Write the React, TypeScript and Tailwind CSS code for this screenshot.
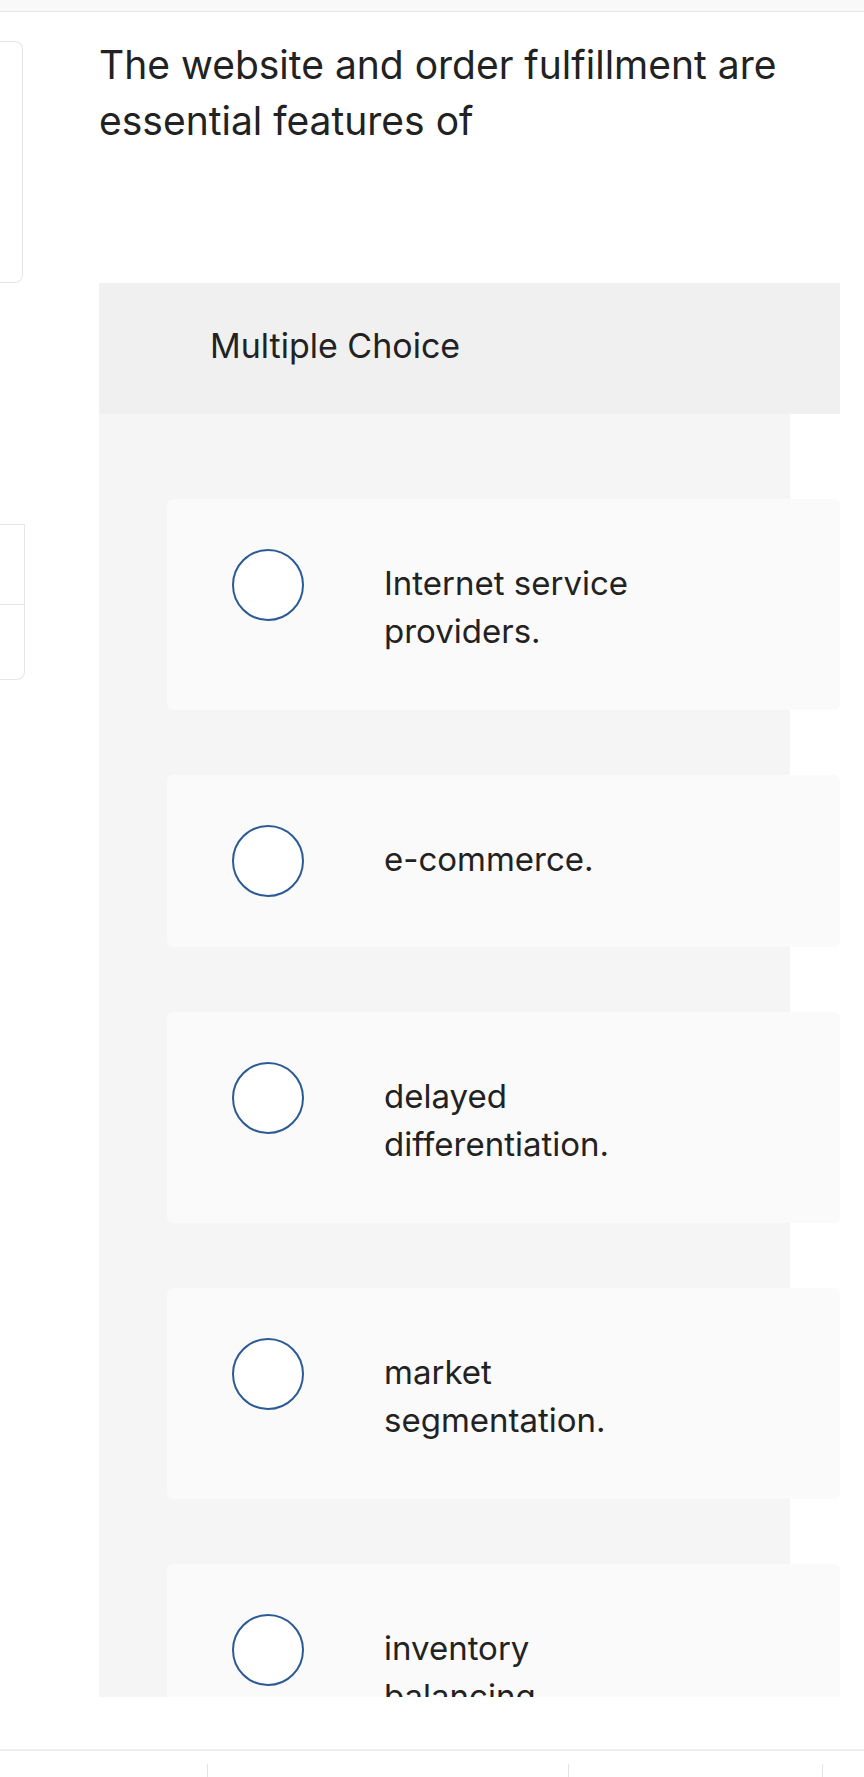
import React from "react";

const options = [
  "Internet service providers.",
  "e-commerce.",
  "delayed differentiation.",
  "market segmentation.",
  "inventory balancing.",
];

const App: React.FC = () => {
  return (
    <div className="w-[864px] h-[1777px] bg-white overflow-hidden flex flex-col font-['Inter',sans-serif] [font-variant-ligatures:none] text-[#222222]">
      {/* top strip */}
      <div className="h-[12px] shrink-0 bg-[#f9f9f9] border-b border-[#e8e8e8]" />

      <div className="flex h-[1737px] shrink-0">
        {/* left side panels */}
        <div className="w-[99px] shrink-0 flex flex-col">
          <div className="mt-[29px] w-[23px] h-[242px] bg-white border border-l-0 border-[#e6e6e6] rounded-r-lg" />
          <div className="mt-[241px] w-[25px] h-[156px] bg-white border border-l-0 border-[#e6e6e6] rounded-br-lg flex flex-col">
            <div className="h-[80px] border-b border-[#e6e6e6]" />
          </div>
        </div>

        {/* question */}
        <div className="w-[741px] shrink-0 flex flex-col">
          <div className="h-[271px] shrink-0 pt-[25px]">
            <p className="text-[39px] leading-[56px] text-[#222222]">
              The website and order fulfillment are essential features of
            </p>
          </div>

          <div className="h-[1414px] shrink-0 overflow-hidden">
            <div className="h-[131px] bg-[#f0f0f0] pl-[111px] pt-[45px]">
              <h2 className="text-[34px] leading-[36px] text-[#222222]">Multiple Choice</h2>
            </div>

            <div className="w-[691px] min-h-full bg-[#f5f5f5] pt-[85px] flex flex-col gap-[65px]">
              {options.map((opt) => (
                <div
                  key={opt}
                  className="w-[673px] ml-[68px] shrink-0 bg-[#fafafa] rounded-md flex items-start pl-[65px] py-[50px]"
                >
                  <div className="w-[72px] h-[72px] shrink-0 rounded-full border-2 border-[#2c5a94] bg-white" />
                  <span className="ml-[80px] mt-[10px] mb-[5px] w-[262px] text-[33px] leading-[48px] text-[#222222]">
                    {opt}
                  </span>
                </div>
              ))}
            </div>
          </div>
        </div>
      </div>

      {/* bottom bar */}
      <div className="flex-1 border-t-2 border-[#efefef] flex">
        <div className="w-[207px] shrink-0" />
        <div className="w-[361px] shrink-0 mt-[13px] border-l border-[#e3e3e3]" />
        <div className="w-[254px] shrink-0 mt-[13px] border-l border-[#e3e3e3]" />
        <div className="flex-1 mt-[13px] border-l border-[#e3e3e3]" />
      </div>
    </div>
  );
};

export default App;
